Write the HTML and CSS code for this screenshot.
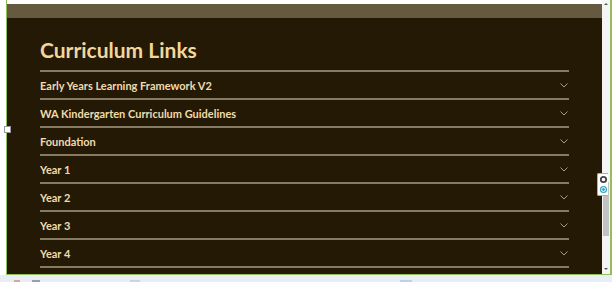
FILE: index.html
```html
<!DOCTYPE html>
<html lang="en">
<head>
	<meta charset="UTF-8">
	<title>Curriculum Links</title>
	<link rel="stylesheet" href="styles.css">
</head>
<body>
	<div class="frame">
		<div class="page">
			<div class="topgap"></div>
			<div class="band"></div>
			<section class="links">
				<h2>Curriculum Links</h2>
				<ul class="accordion">
					<li><span>Early Years Learning Framework V2</span><svg viewBox="0 0 8 5"><path d="M.5.5 4 4 7.5.5"/></svg></li>
					<li><span>WA Kindergarten Curriculum Guidelines</span><svg viewBox="0 0 8 5"><path d="M.5.5 4 4 7.5.5"/></svg></li>
					<li><span>Foundation</span><svg viewBox="0 0 8 5"><path d="M.5.5 4 4 7.5.5"/></svg></li>
					<li><span>Year 1</span><svg viewBox="0 0 8 5"><path d="M.5.5 4 4 7.5.5"/></svg></li>
					<li><span>Year 2</span><svg viewBox="0 0 8 5"><path d="M.5.5 4 4 7.5.5"/></svg></li>
					<li><span>Year 3</span><svg viewBox="0 0 8 5"><path d="M.5.5 4 4 7.5.5"/></svg></li>
					<li><span>Year 4</span><svg viewBox="0 0 8 5"><path d="M.5.5 4 4 7.5.5"/></svg></li>
				</ul>
			</section>
		</div>
		<div class="scrollbar">
			<div class="arrow up"></div>
			<div class="track"><div class="thumb"></div></div>
			<div class="arrow down"></div>
		</div>
	</div>
	<div class="taskbar">
		<i class="tb-icon red"></i>
		<i class="tb-icon dark"></i>
		<i class="tb-icon grey"></i>
		<i class="tb-icon blue"></i>
	</div>

	<div class="handle"></div>
	<div class="widget">
		<svg viewBox="0 0 10 10"><circle cx="5" cy="5" r="3" fill="none" stroke="#444" stroke-width="2"/><circle cx="5" cy="5" r="1" fill="#fff"/></svg>
		<svg viewBox="0 0 10 10"><circle cx="5" cy="5" r="4" fill="#3aa6c4"/><circle cx="5" cy="5" r="2.2" fill="none" stroke="#fff" stroke-width="1"/></svg>
	</div>
</body>
</html>
```

FILE: styles.css
```css
html, body {
	margin: 0;
	padding: 0;
	background: #fff;
	overflow: hidden;
}

body {
	width: 612px;
	height: 282px;
	display: flex;
	flex-direction: column;
	font-family: "Lato", "Open Sans", sans-serif;
}

.frame {
	display: flex;
	height: 274px;
	margin-left: 6px;
	border-left: 1px solid #93bf5a;
	border-right: 2px solid #93bf5a;
	border-bottom: 1px solid #93bf5a;
}

.page {
	flex: 1;
	display: flex;
	flex-direction: column;
	background: #231905;
}

.topgap {
	height: 4px;
	background: #fff;
}

.band {
	height: 14px;
	background: #655a40;
}

.links {
	flex: 1;
	padding: 19px 33px 0 33px;
}

.links h2 {
	margin: 0 0 7px 0;
	font-size: 21px;
	line-height: 26px;
	font-weight: 700;
	color: #f2d79c;
}

.accordion {
	margin: 0;
	padding: 0;
	list-style: none;
}

.accordion li {
	display: flex;
	align-items: center;
	justify-content: space-between;
	height: 26px;
	border-top: 2px solid #857a63;
	font-size: 11px;
	font-weight: 700;
	color: #efdcae;
}

.accordion li:last-child {
	border-bottom: 2px solid #857a63;
}

.accordion svg {
	width: 8px;
	height: 5px;
	margin-right: 1px;
	fill: none;
	stroke: #a99b80;
	stroke-width: 1;
}

.scrollbar {
	width: 8px;
	display: flex;
	flex-direction: column;
	background: #f4f4f4;
}

.arrow {
	height: 9px;
	position: relative;
}

.arrow::after {
	content: "";
	position: absolute;
	left: 2px;
	top: 3px;
	border-left: 2px solid transparent;
	border-right: 2px solid transparent;
}

.arrow.up::after {
	border-bottom: 2px solid #555;
}

.arrow.down::after {
	border-top: 2px solid #555;
}

.track {
	flex: 1;
	padding-top: 173px;
}

.thumb {
	height: 54px;
	margin: 0 1px;
	background: #c2c2c2;
}

.taskbar {
	flex: 1;
	display: flex;
	align-items: flex-end;
	background: #e9eef4;
}

.tb-icon {
	display: block;
	height: 2px;
}

.tb-icon.red {
	width: 6px;
	margin-left: 14px;
	background: #d4a7a7;
}

.tb-icon.dark {
	width: 8px;
	margin-left: 12px;
	background: #9aa0a8;
}

.tb-icon.grey {
	width: 10px;
	margin-left: 90px;
	background: #cfd4da;
}

.tb-icon.blue {
	width: 12px;
	margin-left: 260px;
	background: #b9d2ea;
}

.handle {
	position: absolute;
	left: 4px;
	top: 126px;
	width: 5px;
	height: 5px;
	background: #fff;
	border: 1px solid #999;
}

.widget {
	position: absolute;
	left: 597px;
	top: 173px;
	width: 10px;
	padding: 1px 0;
	display: flex;
	flex-direction: column;
	gap: 1px;
	background: #fff;
	border: 1px solid #9cc65c;
	border-right: none;
	border-radius: 2px 0 0 2px;
}

.widget svg {
	width: 9px;
	height: 9px;
	margin-left: 1px;
}
```
